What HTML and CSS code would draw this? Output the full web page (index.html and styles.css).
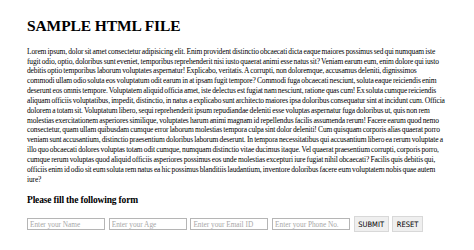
FILE: index.html
```html
<!DOCTYPE html>
<html lang="en">
<head>
    <meta charset="UTF-8">
    <meta name="viewport" content="width=device-width, initial-scale=1.0">
    <title>Sample HTML File</title>
    <link rel="stylesheet" href="styles.css">
</head>
<body>
    <div class="page">
        <h1>SAMPLE HTML FILE</h1>

        <p class="intro">Lorem ipsum, dolor sit amet consectetur adipisicing elit. Enim provident distinctio obcaecati dicta eaque maiores possimus sed qui numquam iste fugit odio, optio, doloribus sunt eveniet, temporibus reprehenderit nisi iusto quaerat animi esse natus sit? Veniam earum eum, enim dolore qui iusto debitis optio temporibus laborum voluptates aspernatur! Explicabo, veritatis. A corrupti, non doloremque, accusamus deleniti, dignissimos commodi ullam odio soluta eos voluptatum odit earum in at ipsam fugit tempore? Commodi fuga obcaecati nesciunt, soluta eaque reiciendis enim deserunt eos omnis tempore. Voluptatem aliquid officia amet, iste delectus est fugiat nam nesciunt, ratione quas cum! Ex soluta cumque reiciendis aliquam officiis voluptatibus, impedit, distinctio, in natus a explicabo sunt architecto maiores ipsa doloribus consequatur sint at incidunt cum. Officia dolorem a totam sit. Voluptatum libero, sequi reprehenderit ipsum repudiandae deleniti esse voluptas aspernatur fuga doloribus ut, quis non rem molestias exercitationem asperiores similique, voluptates harum animi magnam id repellendus facilis assumenda rerum! Facere earum quod nemo consectetur, quam ullam quibusdam cumque error laborum molestias tempora culpa sint dolor deleniti! Cum quisquam corporis alias quaerat porro veniam sunt accusantium, distinctio praesentium doloribus laborum deserunt. In tempora necessitatibus qui accusantium libero ea rerum voluptate a illo quo obcaecati dolores voluptas totam odit cumque, numquam distinctio vitae ducimus itaque. Vel quaerat praesentium corrupti, corporis porro, cumque rerum voluptas quod aliquid officiis asperiores possimus eos unde molestias excepturi iure fugiat nihil obcaecati? Facilis quis debitis qui, officiis enim id odio sit eum soluta rem natus ea hic possimus blanditiis laudantium, inventore doloribus facere eum voluptatem nobis quae autem iure?</p>

        <h3>Please fill the following form</h3>

        <form class="form-row">
            <input type="text" placeholder="Enter your Name">
            <input type="text" placeholder="Enter your Age">
            <input type="text" placeholder="Enter your Email ID">
            <input type="text" placeholder="Enter your Phone No.">
            <button type="submit">SUBMIT</button>
            <button type="reset">RESET</button>
        </form>
    </div>
</body>
</html>
```

FILE: styles.css
```css
body {
    margin: 0;
    font-family: 'Liberation Serif', 'Times New Roman', serif;
    font-size: 7.5px;
    color: #000;
    background-color: #fff;
}

.page {
    padding: 4px 29px 4px 27px;
}

h1 {
    font-size: 15.5px;
    letter-spacing: -0.1px;
    line-height: 19.7px;
    margin: 11.5px 0;
}

.intro {
    line-height: 9.85px;
    letter-spacing: -0.14px;
    word-spacing: -0.45px;
    margin: 8.56px 0;
}

h3 {
    font-size: 9.5px;
    letter-spacing: -0.17px;
    line-height: 11.5px;
    margin: 10px 0;
}

.form-row {
    display: flex;
    align-items: center;
    gap: 3.7px;
}

input[type="text"] {
    box-sizing: border-box;
    width: 78px;
    height: 12.5px;
    margin: 0;
    padding: 0 2px;
    border: 1px solid #b5b5b5;
    font-family: 'Liberation Serif', 'Times New Roman', serif;
    font-size: 7.3px;
}

input::placeholder {
    color: #a8a8a8;
}

button {
    height: 16px;
    margin: 0;
    padding: 0 3.5px;
    border: 1px solid #d8d8d8;
    background-color: #efefef;
    font-family: 'DejaVu Sans Condensed', 'DejaVu Sans', sans-serif;
    font-size: 7.5px;
    color: #000;
}
```
